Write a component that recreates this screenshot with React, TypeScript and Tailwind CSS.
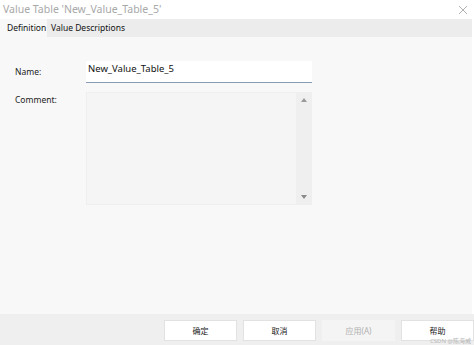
import React from "react";

export default function App() {
  const font = { fontFamily: '"Noto Sans", "Open Sans", "Noto Sans CJK SC", sans-serif' };
  return (
    <div className="w-[474px] h-[345px] bg-white flex flex-col overflow-hidden" style={font}>
      {/* title bar */}
      <div className="h-[19px] flex items-center justify-between pl-[3px] pr-[4px] bg-white">
        <span className="text-[10.5px] leading-none text-[#a8a8a8]">Value Table 'New_Value_Table_5'</span>
        <svg width="10" height="10" viewBox="0 0 10 10" className="mr-[2px]">
          <path d="M1 1 L9 9 M9 1 L1 9" stroke="#a8a8a8" strokeWidth="0.9" />
        </svg>
      </div>
      <div className="flex-1 flex flex-col mr-[2px] bg-[#f8f8f8]">
        {/* tabs */}
        <div className="h-[18px] flex bg-[#ececec] text-[8.5px] text-[#111]">
          <div className="w-[47px] bg-[#f8f8f8] flex items-center pl-[7px]">Definition</div>
          <div className="flex items-center pl-[4px]">Value Descriptions</div>
        </div>
        {/* content */}
        <div className="flex-1 flex flex-col pt-[24px]">
          <div className="flex items-start">
            <div className="w-[86px] pl-[15px] text-[8.5px] text-[#222] pt-[5px]">Name:</div>
            <div className="w-[226px] h-[22px] bg-white border-b border-[#8a9cb4] flex items-start pl-[2px] pt-[1px] text-[9.5px] text-[#111]">
              New_Value_Table_5
            </div>
          </div>
          <div className="flex items-start mt-[9px]">
            <div className="w-[86px] pl-[15px] text-[8.5px] text-[#222] pt-[2px]">Comment:</div>
            <div className="w-[226px] h-[113px] bg-[#f5f5f5] border border-[#efefef] flex">
              <div className="flex-1" />
              <div className="w-[15px] bg-[#efefef] flex flex-col items-center justify-between py-[5px]">
                <svg width="6" height="4" viewBox="0 0 6 4"><path d="M0 4 L3 0 L6 4 Z" fill="#9a9a9a" /></svg>
                <svg width="6" height="4" viewBox="0 0 6 4"><path d="M0 0 L3 4 L6 0 Z" fill="#8a8a8a" /></svg>
              </div>
            </div>
          </div>
        </div>
      </div>
      {/* bottom bar */}
      <div className="h-[31px] bg-[#efefef] flex items-start justify-end gap-[6px] pt-[6px] relative">
        {["确定", "取消", "应用(A)", "帮助"].map((t, i) => (
          <div
            key={t}
            className={`w-[73px] h-[21px] flex items-center justify-center text-[8px] ${
              i === 2 ? "bg-[#f4f4f4] text-[#b0b0b0]" : "bg-white text-[#222] border border-[#e2e2e2]"
            }`}
          >
            {t}
          </div>
        ))}
        <span className="absolute right-[3px] bottom-[1px] text-[6px] text-[#b8b8b8] leading-none">CSDN @陈海威</span>
      </div>
    </div>
  );
}
